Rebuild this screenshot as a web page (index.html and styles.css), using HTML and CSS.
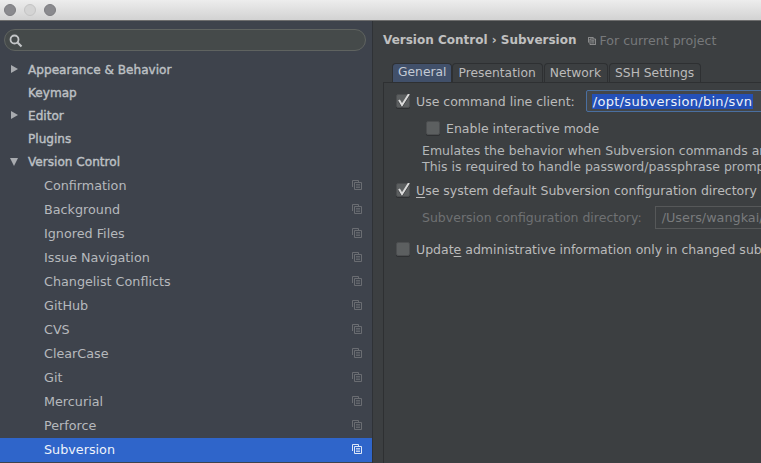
FILE: index.html
```html
<!DOCTYPE html>
<html>
<head>
<meta charset="utf-8">
<title>Settings</title>
<link rel="stylesheet" href="styles.css">
</head>
<body>
<svg class="defs" width="0" height="0">
  <symbol id="copy" viewBox="0 0 10 10">
    <path d="M.5 7V.5H6.500V2" fill="none" stroke="currentColor"/>
    <path d="M2.500 2.500H9.500V9.500H2.500Z" fill="none" stroke="currentColor"/>
    <path d="M4 4.500H8M4 6H8M4 7.500H8" fill="none" stroke="currentColor" stroke-width=".8"/>
  </symbol>
  <symbol id="tick" viewBox="0 0 16 16">
    <path d="M3 7L6 12L13 1" fill="none" stroke="#2e3032" stroke-width="2"/>
    <path d="M3 6L6 11L13 0" fill="none" stroke="#dadada" stroke-width="2"/>
  </symbol>
</svg>
<header class="titlebar">
  <span class="light"></span><span class="light pale"></span><span class="light"></span>
</header>
<main class="window">
  <aside class="sidebar">
    <div class="search">
      <svg class="search-icon" width="14" height="14" viewBox="0 0 14 14"><circle cx="5.500" cy="5.500" r="4" fill="none" stroke="#c4c6c8" stroke-width="1.800"/><path d="M8.500 8.500L12.500 12.500" stroke="#c4c6c8" stroke-width="2.200"/></svg>
    </div>
    <ul class="tree">
      <li class="top"><span class="arrow right"></span>Appearance &amp; Behavior</li>
      <li class="top"><span class="arrow"></span>Keymap</li>
      <li class="top"><span class="arrow right"></span>Editor</li>
      <li class="top"><span class="arrow"></span>Plugins</li>
      <li class="top"><span class="arrow down"></span>Version Control</li>
    </ul>
    <ul class="tree children">
      <li class="child">Confirmation<svg class="copy"><use href="#copy"/></svg></li>
      <li class="child">Background<svg class="copy"><use href="#copy"/></svg></li>
      <li class="child">Ignored Files<svg class="copy"><use href="#copy"/></svg></li>
      <li class="child">Issue Navigation<svg class="copy"><use href="#copy"/></svg></li>
      <li class="child">Changelist Conflicts<svg class="copy"><use href="#copy"/></svg></li>
      <li class="child">GitHub<svg class="copy"><use href="#copy"/></svg></li>
      <li class="child">CVS<svg class="copy"><use href="#copy"/></svg></li>
      <li class="child">ClearCase<svg class="copy"><use href="#copy"/></svg></li>
      <li class="child">Git<svg class="copy"><use href="#copy"/></svg></li>
      <li class="child">Mercurial<svg class="copy"><use href="#copy"/></svg></li>
      <li class="child">Perforce<svg class="copy"><use href="#copy"/></svg></li>
      <li class="child selected">Subversion<svg class="copy"><use href="#copy"/></svg></li>
    </ul>
  </aside>
  <section class="content">
    <div class="crumbs">
      <strong>Version Control › Subversion</strong>
      <svg class="crumb-copy"><use href="#copy"/></svg>
      <span class="scope">For current project</span>
    </div>
    <nav class="tabs">
      <span class="tab active">General</span>
      <span class="tab">Presentation</span>
      <span class="tab">Network</span>
      <span class="tab">SSH Settings</span>
    </nav>
    <div class="panel">
      <div class="row first">
        <span class="check"><svg class="tick"><use href="#tick"/></svg></span>
        <span class="label">Use command line client:</span>
        <span class="field focus"><span class="sel">/opt/subversion/bin/svn</span></span>
      </div>
      <div class="row indent">
        <span class="check"></span>
        <span class="label">Enable interactive mode</span>
      </div>
      <p class="note">Emulates the behavior when Subversion commands are executed directly from the terminal.<br>This is required to handle password/passphrase prompts in the terminal window.</p>
      <div class="row third">
        <span class="check"><svg class="tick"><use href="#tick"/></svg></span>
        <span class="label"><u>U</u>se system default Subversion configuration directory</span>
      </div>
      <div class="row dir">
        <span class="label dim">Subversion configuration directory:</span>
        <span class="field disabled">/Users/wangkai/.subversion</span>
      </div>
      <div class="row last">
        <span class="check"></span>
        <span class="label">Updat<u>e</u> administrative information only in changed subtrees</span>
      </div>
    </div>
  </section>
</main>
</body>
</html>
```
FILE: styles.css
```css
* { box-sizing: border-box; }
html, body { margin: 0; height: 463px; width: 761px; overflow: hidden; }
body { font-family: "DejaVu Sans", sans-serif; font-size: 12.500px; color: #bbbbbb; background: #3c3f41; }
.defs { display: block; height: 0; }
ul { list-style: none; margin: 0; padding: 0; }

.titlebar { height: 21px; display: flex; align-items: center; gap: 8px; padding: 0 4px 1px; background: linear-gradient(#ededed, #d2d2d2); border-bottom: 1px solid #6e6e6e; }
.light { width: 12px; height: 12px; border-radius: 50%; background: #8a8a8e; border: 1px solid #7c7c80; }
.light.pale { background: #d4d4d4; border-color: #c4c4c4; }

.window { display: flex; height: 442px; }
.sidebar { width: 373px; flex: none; background: #3e434c; border-right: 1px solid #2f3236; overflow: hidden; }
.search { height: 22px; margin: 8px 6px 0 4px; padding: 4px 0 0 4px; border: 1px solid #5f6360; border-radius: 11px; background: #454a4a; }
.search-icon { display: block; }

.tree { padding-top: 7px; }
.top { height: 23px; display: flex; align-items: center; padding-left: 11px; font-size: 12.100px; -webkit-text-stroke: .4px #bdc0c4; color: #bdc0c4; }
.arrow { width: 17px; flex: none; height: 9px; }
.arrow.right::before { content: ""; display: block; width: 0; height: 0; border-left: 7px solid #a8abaf; border-top: 4.500px solid transparent; border-bottom: 4.500px solid transparent; }
.arrow.down::before { content: ""; display: block; margin: 1px 0 0 -1px; width: 0; height: 0; border-top: 8px solid #a8abaf; border-left: 4.500px solid transparent; border-right: 4.500px solid transparent; }

.children { padding-top: 1px; }
.child { height: 24px; display: flex; align-items: center; justify-content: space-between; padding: 0 10px 2px 44px; font-size: 12.750px; color: #b6b9bd; }
.copy { width: 10px; height: 10px; color: #6a6d72; }
.selected { background: #2f65ca; color: #eef3fb; }
.selected .copy { color: #dfe8f8; }

.content { flex: 1; min-width: 0; padding: 0 0 0 10px; }
.crumbs { height: 41px; display: flex; align-items: center; white-space: nowrap; padding-bottom: 3px; color: #c0c0c0; }
.crumbs strong { font-size: 12px; }
.crumb-copy { width: 8px; height: 8px; margin: 1px 4px 0 11px; color: #a8a8a8; }
.scope { color: #77797b; font-size: 12.600px; }

.tabs { display: flex; padding-left: 9px; height: 20px; align-items: flex-end; }
.tab { height: 19px; padding: 2px 6px 0 5px; border: 1px solid #2e3032; border-bottom: 0; border-radius: 4px 4px 0 0; white-space: nowrap; background: #3c3f41; color: #bbbbbb; font-size: 12.300px; margin-right: 1px; }
.tab.active { padding: 1px 5px 0; margin-right: 0; background: #41506a; color: #c4cad4; }

.panel { height: 381px; border-left: 1px solid #2e3032; border-top: 1px solid #2e3032; background: #3c3f41; overflow: hidden; padding-top: 7px; }
.row { display: flex; align-items: center; white-space: nowrap; padding-left: 12px; }
.first { height: 22px; }
.indent { height: 20px; margin-top: 6px; padding-left: 42px; }
.check { width: 14px; height: 14px; flex: none; margin-right: 6px; border-radius: 2px; background: #5c5f60; border: 1px solid #4c4e50; position: relative; box-shadow: 0 1px 0 #2e3032; }
.tick { position: absolute; left: -1px; top: -1px; width: 16px; height: 16px; }
.label { flex: none; }
.dim { color: #6f7173; }
.field { flex: none; height: 22px; display: flex; align-items: center; white-space: nowrap; font-size: 13px; letter-spacing: .300px; }
.focus { margin-left: 11px; width: 400px; padding-left: 5px; border: 1px solid #4a6fa0; border-radius: 2px; background: #44474a; color: #eef3fb; }
.sel { background: #2450b8; padding: 0 1px; }
.disabled { height: 23px; margin-left: 13px; width: 400px; padding-left: 6px; border: 1px solid #565859; color: #797b7d; font-size: 12.800px; letter-spacing: 0; }
.note { margin: 5px 0 0 38px; white-space: nowrap; line-height: 16px; color: #b4b7b9; }
.third { height: 20px; margin-top: 5px; }
.dir { height: 23px; margin-top: 6px; padding-left: 38px; }
.last { height: 20px; margin-top: 10px; }
u { text-underline-offset: 2px; }
```
